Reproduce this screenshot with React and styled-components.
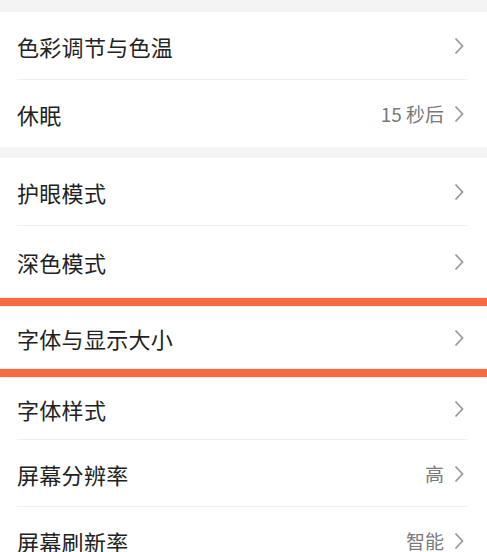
import React from 'react'
import styled, { createGlobalStyle } from 'styled-components'

const Global = createGlobalStyle`
  html, body {
    margin: 0;
    padding: 0;
    background: #f4f4f4;
    font-family: "Noto Sans CJK SC", "Noto Sans", sans-serif;
  }
`

const Page = styled.div`
  width: 487px;
  height: 552px;
  overflow: hidden;
  background: #f4f4f4;
  padding-top: 12px;
  box-sizing: border-box;
`

const Card = styled.div`
  background: #fff;
  margin-bottom: 11px;
`

const Row = styled.div`
  display: flex;
  align-items: center;
  justify-content: space-between;
  height: ${p => p.h || 67}px;
  padding: 0 23px 0 17px;
  box-sizing: border-box;
  position: relative;
  &::after {
    content: '';
    display: ${p => (p.divider ? 'block' : 'none')};
    position: absolute;
    left: 17px;
    right: 20px;
    bottom: 0;
    height: 1px;
    background: #efefef;
  }
`

const Label = styled.span`
  font-size: 22px;
  color: #222;
  letter-spacing: 0.3px;
`

const Right = styled.div`
  display: flex;
  align-items: center;
  gap: 10px;
`

const Value = styled.span`
  font-size: 19px;
  color: #7a7a7a;
`

const Mark = styled.div`
  height: 8px;
  background: #f76b42;
  box-shadow: 0 0 2px #fbb79f;
`

const Chevron = () => (
  <svg width="10" height="18" viewBox="0 0 10 18">
    <path d="M1.5 1.5 L8.5 9 L1.5 16.5" fill="none" stroke="#9a9a9a" strokeWidth="1.8" />
  </svg>
)

const Item = ({ label, value, divider, h }) => (
  <Row divider={divider} h={h}>
    <Label>{label}</Label>
    <Right>
      {value && <Value>{value}</Value>}
      <Chevron />
    </Right>
  </Row>
)

export default function App() {
  return (
    <>
      <Global />
      <Page>
        <Card>
          <Item label="色彩调节与色温" divider h={68} />
          <Item label="休眠" value="15 秒后" />
        </Card>
        <Card>
          <Item label="护眼模式" divider h={68} />
          <Item label="深色模式" h={72} />
          <Mark />
          <Item label="字体与显示大小" h={63} />
          <Mark />
          <Item label="字体样式" divider h={63} />
          <Item label="屏幕分辨率" value="高" divider />
          <Item label="屏幕刷新率" value="智能" />
        </Card>
      </Page>
    </>
  )
}
